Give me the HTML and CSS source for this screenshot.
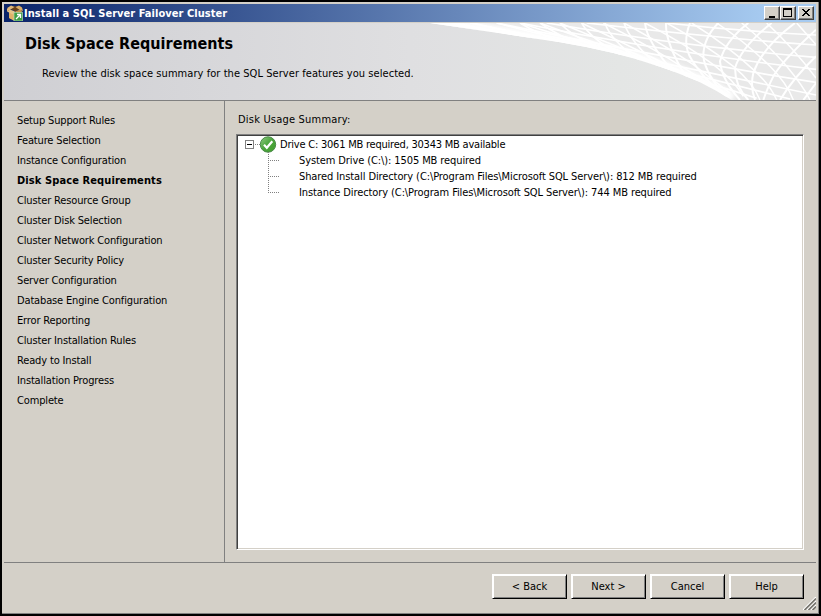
FILE: index.html
```
<!DOCTYPE html>
<html lang="en">
<head>
    <meta charset="UTF-8">
    <meta name="viewport" content="width=device-width, initial-scale=1.0">
    <title>Install a SQL Server Failover Cluster</title>
    <link rel="stylesheet" href="styles.css">
</head>
<body>
    <div class="window">
        <div class="titlebar">
            <svg class="app-icon" width="16" height="16" viewBox="0 0 16 16">
                <path d="M2 6l6 2 6-2v7l-6 3-6-3z" fill="#c08a3c"/>
                <path d="M2 6l6 2v8l-6-3z" fill="#e0b268"/>
                <path d="M2.500 3.500l5-2.500 6 2-5 3.500z" fill="#6b4217"/>
                <path d="M1 2.500l3-2 3.500 1.500-4 2.500L0 6.500 0 4z" fill="#e0b878"/>
                <path d="M8.500 2l3.500-1.500 3 2L16 6l-3.500-1z" fill="#d9ad66"/>
                <path d="M0 6.500l3-2 5 2-2 3z" fill="#e6c48a"/>
                <path d="M8 6.500l5-2 2.500 2-5 2z" fill="#c9964c"/>
                <rect x="7" y="7.500" width="8.500" height="8.500" fill="#3f9e46" stroke="#b9dcb3" stroke-width=".7"/>
                <path d="M9 14l4-4M10 9.500h3.500V13" fill="none" stroke="#fff" stroke-width="1.300"/>
            </svg>
            <span class="caption">Install a SQL Server Failover Cluster</span>
            <div class="controls">
                <button class="ctl" aria-label="Minimize"><svg width="12" height="10" shape-rendering="crispEdges"><path d="M3 8h6v2H3z"/></svg></button>
                <button class="ctl" aria-label="Maximize"><svg width="12" height="10" shape-rendering="crispEdges"><path d="M1 0h9v9H1zM2 2v6h7V2z" fill-rule="evenodd"/></svg></button>
                <button class="ctl close" aria-label="Close"><svg width="12" height="10" shape-rendering="crispEdges"><path d="M2 1h2v1h1v1h2V2h1V1h2v1H9v1H8v1H7v1h1v1h1v1h1v1H8V7H7V6H5v1H4v1H2V7h1V6h1V5h1V4H4V3H3V2H2z"/></svg></button>
            </div>
        </div>

        <div class="header">
            <!-- coordinates are in thirds of a pixel -->
            <svg class="mesh" width="396" height="77" viewBox="0 0 1188 231">
                <defs>
                    <clipPath id="sail"><path d="M30 0L240 31L420 58Q500 71 580 90Q650 107 720 131Q790 155 840 178Q890 203 935 231H1188V0z"/></clipPath>
                    <filter id="soft" x="-5%" y="-20%" width="110%" height="140%"><feGaussianBlur stdDeviation="8"/></filter>
                </defs>
                <g clip-path="url(#sail)">
                    <rect width="1188" height="231" fill="#e9e9e9"/>
                    <path d="M30 0L240 31L420 58Q500 71 580 90Q650 107 720 131Q790 155 840 178Q890 203 935 231" fill="none" stroke="#fff" stroke-width="46" filter="url(#soft)"/>
                    <g fill="none" stroke="#fff" stroke-width="5">
                        <path d="M300 0Q350 30 420 55M360 0Q410 35 480 64M420 0Q450 35 540 78M485 0Q510 45 600 95M555 0Q570 50 660 115M612 0Q630 55 715 130"/>
                        <path stroke-width="6" d="M675 0Q680 55 760 147M738 0Q735 60 800 165M810 0Q785 65 815 110Q840 150 880 190M895 0Q850 45 850 100Q855 150 920 225M985 0Q915 55 900 115Q905 170 960 231M1055 0Q965 70 945 135Q945 190 985 231M1125 0Q1025 75 1000 150Q990 190 1005 231M1188 20Q1085 115 1060 160Q1040 200 1030 231M1188 100Q1120 165 1080 231M1188 180L1150 231"/>
                        <path stroke-width="4.500" d="M1130 0L1188 65M1040 0Q1120 75 1188 165M965 0Q1050 70 1100 130Q1150 190 1170 231M890 0Q980 60 1050 130Q1100 180 1120 231M815 0Q920 65 1000 140Q1050 185 1070 231M740 0Q850 60 940 130Q1000 180 1020 231M675 0Q800 65 880 125Q940 170 970 220M612 0Q740 70 820 125L930 210M550 0Q680 65 760 115L880 190M485 0Q590 50 700 105L820 165M420 0Q540 50 640 90L760 145M360 0Q480 45 590 80L700 120M300 0Q420 40 540 70M230 0Q360 36 480 58M160 0Q290 32 400 50M90 0Q220 26 330 42"/>
                        <path d="M738 0Q960 25 1188 36M500 0Q888 45 1188 66M380 0Q800 72 1188 103M300 0Q740 88 1188 139M230 0Q720 104 1188 178M150 0Q690 110 1188 216M100 0Q640 105 1110 228M30 0Q600 90 1010 226"/>
                    </g>
                </g>
            </svg>
            <h1>Disk Space Requirements</h1>
            <p>Review the disk space summary for the SQL Server features you selected.</p>
        </div>

        <div class="main">
            <ul class="steps">
                <li>Setup Support Rules</li>
                <li>Feature Selection</li>
                <li>Instance Configuration</li>
                <li class="current">Disk Space Requirements</li>
                <li>Cluster Resource Group</li>
                <li>Cluster Disk Selection</li>
                <li>Cluster Network Configuration</li>
                <li>Cluster Security Policy</li>
                <li>Server Configuration</li>
                <li>Database Engine Configuration</li>
                <li>Error Reporting</li>
                <li>Cluster Installation Rules</li>
                <li>Ready to Install</li>
                <li>Installation Progress</li>
                <li>Complete</li>
            </ul>
            <div class="content">
                <div class="label">Disk Usage Summary:</div>
                <div class="tree">
                    <div class="node root">
                        <svg class="expander" width="15" height="16" shape-rendering="crispEdges"><rect x=".5" y="4.500" width="8" height="8" fill="#fff" stroke="#808080"/><path d="M2 8h5v1H2z"/><path d="M10 8.500h5" stroke="#808080" stroke-dasharray="1 1"/></svg>
                        <svg class="ok" width="17" height="17" viewBox="0 0 17 17">
                            <defs><linearGradient id="green" x1="0" y1="0" x2="1" y2="1"><stop offset="0" stop-color="#8fcb80"/><stop offset=".5" stop-color="#4aa43c"/><stop offset="1" stop-color="#43a02c"/></linearGradient></defs>
                            <circle cx="8" cy="8.500" r="7.700" fill="url(#green)" stroke="#4a8a48"/>
                            <path d="M4 8.800l2.800 3 5.500-6.500" fill="none" stroke="#fff" stroke-width="2.200"/>
                        </svg>
                        <span>Drive C: 3061 MB required, 30343 MB available</span>
                    </div>
                    <div class="node child"><i></i><span>System Drive (C:\): 1505 MB required</span></div>
                    <div class="node child"><i></i><span>Shared Install Directory (C:\Program Files\Microsoft SQL Server\): 812 MB required</span></div>
                    <div class="node child"><i></i><span>Instance Directory (C:\Program Files\Microsoft SQL Server\): 744 MB required</span></div>
                </div>
            </div>
        </div>

        <div class="footer">
            <button class="btn">&lt; Back</button>
            <button class="btn">Next &gt;</button>
            <button class="btn">Cancel</button>
            <button class="btn">Help</button>
            <svg class="grip" width="13" height="13"><path d="M0 13L13 0M4 13L13 4M8 13L13 8" stroke="#fff" stroke-width="1.300"/><path d="M1.500 13L13 1.500M5.500 13L13 5.500M9.500 13L13 9.500" stroke="#77756f" stroke-width="1.700"/></svg>
        </div>
    </div>
</body>
</html>
```
FILE: styles.css
```
* { box-sizing: border-box; }
body { margin: 0; padding: 2px; background: #000; font-family: "DejaVu Sans Condensed", "DejaVu Sans", sans-serif; font-size: 11px; color: #000; }
h1, p, ul { margin: 0; padding: 0; }
.window { display: flex; flex-direction: column; width: 817px; height: 612px; padding: 2px 2px 0; background: #d4d0c8; border-right: 1px solid #808080; border-bottom: 1px solid #808080; }

.titlebar { display: flex; align-items: center; height: 18px; margin-bottom: 1px; padding: 0 2px 0 3px; background: linear-gradient(to right, #0a246a, #a6caf0 760px); color: #fff; }
.app-icon { margin-right: 1px; }
.caption { flex: 1; font-weight: bold; letter-spacing: 0.04px; white-space: nowrap; }
.controls { display: flex; }
.ctl { display: flex; width: 16px; height: 14px; padding: 1px; background: #d4d0c8; border: 1px solid; border-color: #fff #404040 #404040 #fff; box-shadow: inset -1px -1px #808080; }
.ctl.close { margin-left: 2px; }

.header { position: relative; height: 78px; padding: 11px 0 0 21px; background: linear-gradient(to right, #cfcfd3, #dfdfe1 50%, #e4e6e5 76%, #e8e8e8 88%); border-bottom: 1px solid #808080; }
.mesh { position: absolute; top: 0; right: 0; }
.header h1 { font-size: 16px; line-height: 20px; letter-spacing: 0.03px; }
.header p { padding: 13px 0 0 17px; line-height: 14px; letter-spacing: 0.06px; }

.main { display: flex; height: 461px; }
.steps { width: 221px; padding: 10px 0 0 13px; border-right: 1px solid #808080; list-style: none; line-height: 20px; letter-spacing: -0.15px; }
.steps .current { font-weight: bold; letter-spacing: 0.1px; }
.content { flex: 1; padding: 12px 12px 0 11px; }
.label { height: 21px; padding-left: 2px; line-height: 14px; letter-spacing: 0.2px; }
.tree { height: 416px; background: #fff; border: 1px solid; border-color: #808080 #fff #fff #808080; box-shadow: inset 1px 1px #404040, inset -1px -1px #d4d0c8; padding: 1px 0 0 8px; letter-spacing: -0.1px; white-space: nowrap; }
.node { display: flex; align-items: center; height: 16px; }
.root { letter-spacing: -0.22px; }
.ok { flex: none; margin-right: 3px; }
.child { padding-left: 23px; }
.child i { width: 11px; height: 16px; margin-right: 20px; background: repeating-linear-gradient(to right, #808080 0 1px, transparent 1px 2px) 0 8px / 11px 1px no-repeat, repeating-linear-gradient(to bottom, #808080 0 1px, transparent 1px 2px) 0 0 / 1px 16px no-repeat; }
.child:last-child i { background-size: 11px 1px, 1px 8px; }

.footer { position: relative; flex: 1; display: flex; justify-content: flex-end; gap: 4px; padding: 11px 12px 0 0; border-top: 1px solid #808080; }
.btn { width: 75px; height: 25px; padding: 0 0 1px; background: #d4d0c8; border: 1px solid; border-color: #fff #000 #000 #fff; box-shadow: inset 1px 1px #fff, inset -1px -1px #808080; font: inherit; }
.grip { position: absolute; right: 0; bottom: 3px; }
```
